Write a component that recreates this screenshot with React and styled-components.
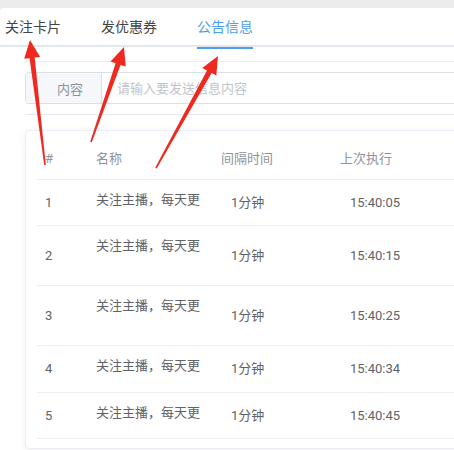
import React from "react";
import styled, { createGlobalStyle } from "styled-components";

const Global = createGlobalStyle`
  html, body { margin: 0; padding: 0; background: #ffffff; }
  body { font-family: Roboto, "Noto Sans CJK SC", "Noto Sans", sans-serif; }
  * { box-sizing: border-box; }
`;

const Page = styled.div`
  position: relative;
  width: 454px;
  height: 450px;
  overflow: hidden;
  background: #ececec;
  padding-top: 8px;
`;

const Panel = styled.div`
  background: #ffffff;
  height: 100%;
  border-top-left-radius: 4px;
`;

const TabBar = styled.div`
  display: flex;
  height: 39px;
  padding-left: 5px;
  border-bottom: 2px solid #e4e7ed;
`;

const Tab = styled.div`
  position: relative;
  display: flex;
  align-items: center;
  height: 39px;
  padding: 0 ${(p) => (p.$last ? 0 : 40)}px 0 0;
  font-size: 14px;
  color: ${(p) => (p.$active ? "#4c9ef0" : "#444444")};
  white-space: nowrap;
  span {
    position: relative;
    display: block;
    height: 39px;
    line-height: 39px;
  }
  span::after {
    content: "";
    display: ${(p) => (p.$active ? "block" : "none")};
    position: absolute;
    left: 0;
    right: 0;
    bottom: -2px;
    height: 2px;
    background: #4c9ef0;
  }
`;

const Content = styled.div`
  padding-left: 25px;
`;

const FormBox = styled.div`
  margin-top: 14px;
  border-top: 1px solid #ebeef5;
  border-bottom: 1px solid #e6e9ef;
  padding: 10px 0;
`;

const InputGroup = styled.div`
  display: flex;
  height: 32px;
  width: 460px;
  border: 1px solid #dcdfe6;
  border-radius: 4px;
  overflow: hidden;
  font-size: 13px;
`;

const Prepend = styled.div`
  display: flex;
  align-items: center;
  width: 76px;
  padding-left: 31px;
  background: #f5f7fa;
  color: #909399;
  border-right: 1px solid #dcdfe6;
`;

const Field = styled.input`
  flex: 1;
  border: none;
  outline: none;
  padding-left: 15px;
  font-size: 13px;
  font-family: inherit;
  color: #606266;
  background: #fff;
  &::placeholder { color: #c0c4cc; }
`;

const Card = styled.div`
  margin-top: 15px;
  width: 460px;
  height: 319px;
  border: 1px solid #ebeef5;
  border-radius: 4px;
  background: #fff;
  box-shadow: 0 2px 10px rgba(0, 0, 0, 0.06);
  padding: 11px 0 0 11px;
`;

const Row = styled.div`
  display: grid;
  grid-template-columns: 51px 125px 119px 1fr;
  height: ${(p) => p.$h}px;
  border-bottom: 1px solid #ebeef5;
  font-size: 13px;
  color: ${(p) => (p.$head ? "#909399" : "#606266")};
`;

const Cell = styled.div`
  display: flex;
  align-items: ${(p) => (p.$top ? "flex-start" : "center")};
  padding-left: ${(p) => 8 + (p.$indent || 0)}px;
  padding-top: ${(p) => (p.$top ? 11 : 0)}px;
  padding-bottom: ${(p) => (p.$head ? 4 : 0)}px;
  line-height: 18px;
  white-space: nowrap;
  overflow: hidden;
`;

const Overlay = styled.svg`
  position: absolute;
  left: 0;
  top: 0;
  pointer-events: none;
`;

function arrowPoints(tx, ty, px, py) {
  const dx = px - tx;
  const dy = py - ty;
  const len = Math.hypot(dx, dy);
  const ux = dx / len;
  const uy = dy / len;
  const nx = -uy;
  const ny = ux;
  const L = 18;
  const bx = px - ux * L;
  const by = py - uy * L;
  const pts = [
    [tx + nx * 0.8, ty + ny * 0.8],
    [bx + nx * 2.6, by + ny * 2.6],
    [bx + nx * 8, by + ny * 8],
    [px, py],
    [bx - nx * 8, by - ny * 8],
    [bx - nx * 2.6, by - ny * 2.6],
    [tx - nx * 0.8, ty - ny * 0.8],
  ];
  return pts.map((p) => p.map((v) => v.toFixed(1)).join(",")).join(" ");
}

const arrows = [
  [45, 165, 30, 40],
  [91, 142, 124, 47],
  [156, 168, 218, 56],
];

const rows = [
  { n: 1, t: "15:40:05", h: 46 },
  { n: 2, t: "15:40:15", h: 60 },
  { n: 3, t: "15:40:25", h: 60 },
  { n: 4, t: "15:40:34", h: 47 },
  { n: 5, t: "15:40:45", h: 46 },
];

export default function App() {
  return (
    <>
      <Global />
      <Page>
        <Panel>
          <TabBar>
            <Tab><span>关注卡片</span></Tab>
            <Tab><span>发优惠券</span></Tab>
            <Tab $active $last><span>公告信息</span></Tab>
          </TabBar>
          <Content>
            <FormBox>
              <InputGroup>
                <Prepend>内容</Prepend>
                <Field placeholder="请输入要发送信息内容" />
              </InputGroup>
            </FormBox>
            <Card>
              <Row $head $h={38}>
                <Cell $head>#</Cell>
                <Cell $head>名称</Cell>
                <Cell $head>间隔时间</Cell>
                <Cell $head>上次执行</Cell>
              </Row>
              {rows.map((r) => (
                <Row key={r.n} $h={r.h}>
                  <Cell>{r.n}</Cell>
                  <Cell $top>关注主播，每天更</Cell>
                  <Cell $indent={10}>1分钟</Cell>
                  <Cell $indent={10}>{r.t}</Cell>
                </Row>
              ))}
            </Card>
          </Content>
        </Panel>
        <Overlay width="454" height="450" viewBox="0 0 454 450">
          {arrows.map((a, i) => (
            <polygon key={i} points={arrowPoints(...a)} fill="#ee2a20" />
          ))}
        </Overlay>
      </Page>
    </>
  );
}
